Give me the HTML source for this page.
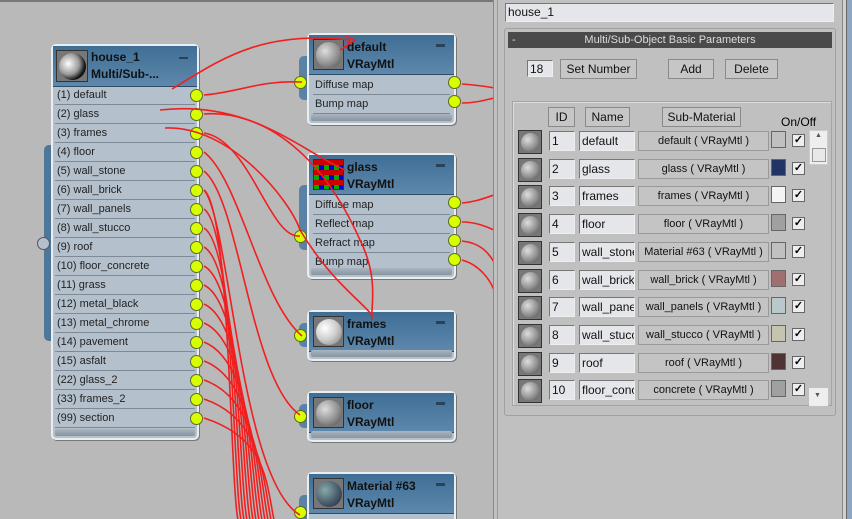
<!DOCTYPE html>
<html style="width:852px;height:519px;overflow:hidden"><head><meta charset="utf-8"><style>
*{margin:0;padding:0;box-sizing:border-box}
body{width:852px;height:519px;overflow:hidden;background:#b9b9b9;font-family:"Liberation Sans",sans-serif;position:relative}
.a{position:absolute}
.node{position:absolute;background:#b4c0cc;border:2px solid #e8eef2;border-radius:5px;box-shadow:1px 1px 0 #777}
.hd{position:absolute;left:0;right:0;top:0;background:linear-gradient(#3f6e95,#5e88ac);border-bottom:1px solid #2d4c66}
.hd b{position:absolute;font-size:12px;color:#111;font-weight:bold}
.min{position:absolute;right:9px;top:9px;width:9px;height:3px;background:#2b4256}
.row{position:absolute;left:4px;right:4px;font-size:11px;color:#222;border-bottom:1px solid #7d8994;padding-left:2px}
.sk{position:absolute;width:13px;height:13px;border-radius:50%;background:#d8ff00;border:1px solid #5a6a20}
.ft{position:absolute;left:2px;right:2px;bottom:2px;height:7px;background:linear-gradient(#aab5c0,#8894a0);border-radius:2px}
.th{position:absolute;width:22px;height:22px;background:#777;border:1px solid #333}
.th i{position:absolute;left:2px;top:2px;width:17px;height:17px;border-radius:50%;background:radial-gradient(circle at 35% 35%,#ddd,#888 60%,#444)}
.pan{background:#c0c0c0}
.btn{position:absolute;border:1px solid #8a8a8a;background:#c6c6c6;font-size:12px;color:#111;text-align:center;line-height:18px}
.fld{position:absolute;background:#e4e6ea;border:1px solid #777;border-right-color:#eee;border-bottom-color:#eee;font-size:12px;color:#111;line-height:16px;padding-left:2px;white-space:nowrap;overflow:hidden}
.sm{position:absolute;border:1px solid #999;background:#c4c4c4;font-size:11px;line-height:18px;text-align:center;color:#111;white-space:nowrap;overflow:hidden}
.cb{position:absolute;width:13px;height:13px;background:#eee;border:1px solid #666;font-size:11px;line-height:11px;text-align:center;font-weight:bold}
.col{position:absolute;width:15px;height:17px;border:1px solid #666}
</style></head><body>
<div class="a" style="left:0;top:0;width:494px;height:2px;background:#777"></div>

<div class="a" style="left:44px;top:145px;width:12px;height:196px;background:#4e7699;border-radius:5px 0 0 5px"></div>
<div class="sk" style="left:37px;top:237px;background:#b4c0cc;border-color:#556"></div>

<div class="node" style="left:51px;top:44px;width:148px;height:396px">
 <div class="hd" style="height:41px">
  <div class="th" style="left:3px;top:4px;width:32px;height:32px"><i style="width:27px;height:27px;background:radial-gradient(circle at 35% 40%,#fff,#999 45%,#111 70%)"></i></div>
  <b style="left:38px;top:4px">house_1</b><b style="left:38px;top:21px">Multi/Sub-...</b>
  <div class="min" style="top:11px;height:2px"></div>
 </div>
 <div class="ft"></div>
</div>

<div class="a" style="left:299px;top:56px;width:12px;height:44px;background:#5a82a6;border-radius:5px 0 0 5px"></div>
<div class="node" style="left:307px;top:33px;width:149px;height:92px">
 <div class="hd" style="height:40px"><div class="th" style="left:4px;top:4px;width:31px;height:31px"><i style="width:26px;height:26px"></i></div><b style="left:38px;top:5px">default</b><b style="left:38px;top:22px">VRayMtl</b><div class="min"></div></div>
 <div class="row" style="top:41px;height:19px;line-height:18px">Diffuse map</div>
 <div class="row" style="top:60px;height:19px;line-height:18px">Bump map</div>
 <div class="ft"></div>
</div>
<div class="a" style="left:299px;top:185px;width:12px;height:65px;background:#5a82a6;border-radius:5px 0 0 5px"></div>
<div class="node" style="left:307px;top:153px;width:149px;height:126px">
 <div class="hd" style="height:40px"><div class="th" style="left:4px;top:4px;width:31px;height:31px;background:repeating-conic-gradient(#c00 0 25%,#00c 0 50%,#0a0 0 75%,#ddd 0) 0 0/10px 10px"></div><b style="left:38px;top:5px">glass</b><b style="left:38px;top:22px">VRayMtl</b><div class="min"></div></div>
 <div class="row" style="top:41px;height:19px;line-height:18px">Diffuse map</div>
 <div class="row" style="top:60px;height:19px;line-height:18px">Reflect map</div>
 <div class="row" style="top:79px;height:19px;line-height:18px">Refract map</div>
 <div class="row" style="top:98px;height:19px;line-height:18px">Bump map</div>
 <div class="ft"></div>
</div>
<div class="a" style="left:299px;top:323px;width:12px;height:24px;background:#5a82a6;border-radius:5px 0 0 5px"></div>
<div class="node" style="left:307px;top:310px;width:149px;height:51px">
 <div class="hd" style="height:40px"><div class="th" style="left:4px;top:4px;width:31px;height:31px"><i style="width:26px;height:26px;background:radial-gradient(circle at 35% 35%,#fff,#ccc 50%,#777)"></i></div><b style="left:38px;top:5px">frames</b><b style="left:38px;top:22px">VRayMtl</b><div class="min"></div></div>
 <div class="ft"></div>
</div>
<div class="a" style="left:299px;top:404px;width:12px;height:24px;background:#5a82a6;border-radius:5px 0 0 5px"></div>
<div class="node" style="left:307px;top:391px;width:149px;height:51px">
 <div class="hd" style="height:40px"><div class="th" style="left:4px;top:4px;width:31px;height:31px"><i style="width:26px;height:26px"></i></div><b style="left:38px;top:5px">floor</b><b style="left:38px;top:22px">VRayMtl</b><div class="min"></div></div>
 <div class="ft"></div>
</div>
<div class="a" style="left:299px;top:495px;width:12px;height:24px;background:#5a82a6;border-radius:5px 0 0 0"></div>
<div class="node" style="left:307px;top:472px;width:149px;height:47px;border-bottom:none;border-radius:5px 5px 0 0">
 <div class="hd" style="height:40px"><div class="th" style="left:4px;top:4px;width:31px;height:31px"><i style="width:26px;height:26px;background:radial-gradient(circle at 35% 35%,#8aa,#456 60%,#223)"></i></div><b style="left:38px;top:5px">Material #63</b><b style="left:38px;top:22px">VRayMtl</b><div class="min"></div></div>
</div>

<div id="rows"></div>

<svg class="a" style="left:0;top:0" width="494" height="519" fill="none" stroke="#f02020" stroke-width="1.6">
<path d="M204 95 C240 92 260 80 302 82"/>
<path d="M204 114 C260 110 320 150 360 240 C380 280 370 310 372 320"/>
<path d="M204 133 C250 140 270 240 300 236"/>
<path d="M204 152 C240 180 260 300 302 336"/>
<path d="M204 171 C240 200 250 380 300 415"/>
<path d="M204 190 C230 220 240 480 300 515"/>
<path d="M172 89 C220 60 260 30 350 40 L346 48"/>
<path d="M160 110 C250 100 300 150 345 170"/>
<path d="M165 128 C230 125 290 200 300 230 C330 280 360 300 372 315"/>
<path d="M340 50 L355 40 L345 36"/>
<path d="M462 84 C475 85 485 86 494 88"/>
<path d="M462 103 C475 103 485 100 494 98"/>
<path d="M462 203 C475 202 485 198 494 195"/>
<path d="M462 222 C475 222 485 226 494 230"/>
<path d="M462 241 C480 243 488 252 494 262"/>
<path d="M462 260 C480 265 490 280 494 290"/>
<g id="bundle"></g>
</svg>

<div class="a" style="left:493px;top:0;width:1px;height:519px;background:#888"></div>
<div class="a pan" style="left:494px;top:0;width:349px;height:519px"></div>
<div class="a" style="left:497px;top:0;width:1px;height:519px;background:#999"></div>
<div class="fld" style="left:505px;top:3px;width:329px;height:19px;line-height:17px">house_1</div>
<div class="a" style="left:504px;top:28px;width:332px;height:388px;border:1px solid #a0a0a0;border-radius:3px"></div>
<div class="a" style="left:508px;top:32px;width:324px;height:16px;background:#4a4a4a;color:#ddd;font-size:11px;line-height:16px;text-align:center">Multi/Sub-Object Basic Parameters<span class="a" style="left:4px;top:0">-</span></div>
<div class="fld" style="left:527px;top:60px;width:26px;height:17px">18</div>
<div class="btn" style="left:560px;top:59px;width:77px;height:20px">Set Number</div>
<div class="btn" style="left:668px;top:59px;width:46px;height:20px">Add</div>
<div class="btn" style="left:725px;top:59px;width:53px;height:20px">Delete</div>
<div class="a" style="left:512px;top:101px;width:320px;height:305px;border:1px solid #a4a4a4;box-shadow:inset 1px 1px 0 #ddd"></div>
<div class="btn" style="left:548px;top:107px;width:27px;height:20px">ID</div>
<div class="btn" style="left:585px;top:107px;width:45px;height:20px">Name</div>
<div class="btn" style="left:662px;top:107px;width:79px;height:20px">Sub-Material</div>
<div class="a" style="left:781px;top:115px;font-size:12px">On/Off</div>
<div class="a" style="left:809px;top:130px;width:19px;height:35px;background:#eee;border:1px solid #ccc"><div class="a" style="left:2px;top:17px;width:14px;height:14px;background:#e8e8e8;border:1px solid #999"></div><span class="a" style="left:5px;top:1px;font-size:7px;color:#555">▲</span></div>
<div class="a" style="left:809px;top:388px;width:19px;height:18px;background:#eee"><span class="a" style="left:5px;top:4px;font-size:7px;color:#555">▼</span></div>
<div id="tbl"></div>
<div class="a" style="left:842px;top:0;width:1px;height:519px;background:#888"></div>
<div class="a" style="left:843px;top:0;width:3px;height:519px;background:#d0d0d0"></div>
<div class="a" style="left:846px;top:0;width:6px;height:519px;background:#8ea6c2;border-left:1px solid #666"></div>

<script>
var names=["(1) default","(2) glass","(3) frames","(4) floor","(5) wall_stone","(6) wall_brick","(7) wall_panels","(8) wall_stucco","(9) roof","(10) floor_concrete","(11) grass","(12) metal_black","(13) metal_chrome","(14) pavement","(15) asfalt","(22) glass_2","(33) frames_2","(99) section"];
var h="";
names.forEach(function(n,i){var y=86+i*19;h+='<div class="row" style="left:55px;width:140px;top:'+y+'px;height:19px;line-height:18px">'+n+'</div><div class="sk" style="left:190px;top:'+(y+3)+'px"></div>';});
[[294,76],[448,76],[448,95],[294,230],[448,196],[448,215],[448,234],[448,253],[294,329],[294,410],[294,506]].forEach(function(p){h+='<div class="sk" style="left:'+p[0]+'px;top:'+p[1]+'px"></div>'});
document.getElementById("rows").innerHTML=h;
var b="";for(var i=5;i<18;i++){var y=95+i*19;var x=215+i*3;b+='<path d="M204 '+y+' C'+(x)+' '+(y+20)+' '+(x)+' 480 '+(x+8)+' 520"/>';}
document.getElementById("bundle").innerHTML=b;
var rows=[["1","default","default  ( VRayMtl )","#c0c0c0"],["2","glass","glass  ( VRayMtl )","#223366"],["3","frames","frames  ( VRayMtl )","#f4f4f4"],["4","floor","floor  ( VRayMtl )","#a0a0a0"],["5","wall_stone","Material #63  ( VRayMtl )","#c0c0c0"],["6","wall_brick","wall_brick  ( VRayMtl )","#a07070"],["7","wall_panels","wall_panels  ( VRayMtl )","#b8c8cc"],["8","wall_stucco","wall_stucco  ( VRayMtl )","#c4c4b0"],["9","roof","roof  ( VRayMtl )","#4e3434"],["10","floor_concrete","concrete  ( VRayMtl )","#a0a0a0"]];
var t="";rows.forEach(function(r,i){var y=Math.round(130+i*27.7);
t+='<div class="th" style="left:518px;top:'+(y)+'px;width:24px;height:24px"><i style="width:19px;height:19px"></i></div>';
t+='<div class="fld" style="left:549px;top:'+(y+1)+'px;width:26px;height:20px;line-height:18px">'+r[0]+'</div>';
t+='<div class="fld" style="left:579px;top:'+(y+1)+'px;width:56px;height:20px;line-height:18px">'+r[1]+'</div>';
t+='<div class="sm" style="left:638px;top:'+(y+1)+'px;width:131px;height:20px">'+r[2]+'</div>';
t+='<div class="col" style="left:771px;top:'+(y+1)+'px;background:'+r[3]+'"></div>';
t+='<div class="cb" style="left:792px;top:'+(y+4)+'px">✓</div>';});
document.getElementById("tbl").innerHTML=t;
</script>
</body></html>
